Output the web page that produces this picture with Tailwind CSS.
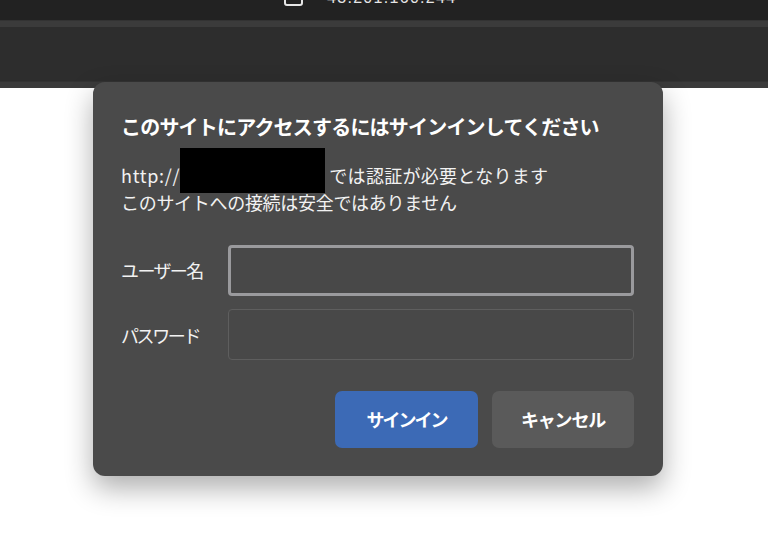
<!DOCTYPE html>
<html lang="ja">
  <head>
    <meta charset="UTF-8" />
    <title>Sign in</title>
    <script src="https://cdn.jsdelivr.net/npm/@tailwindcss/browser@4"></script>
  </head>
  <body class="bg-white">
    <div class="relative w-[768px] h-[548px] overflow-hidden font-['Noto_Sans_CJK_JP','Noto_Sans',sans-serif] bg-white">
      <!-- Browser chrome -->
      <div class="h-[20px] bg-[#222222] overflow-hidden flex items-start pl-[284px]">
        <div class="w-[19px] h-[19px] -mt-[13px] shrink-0 border-2 border-[#e6e6e6] rounded-[3px]"></div>
        <span class="ml-[24px] -mt-[12px] text-[16px] leading-[20px] text-[#e6e6e6] tracking-[1.3px] font-['Liberation_Sans',sans-serif]">43.201.160.244</span>
      </div>
      <div class="h-[7px] bg-[#3b3b3b] border-t border-[#333333]"></div>
      <div class="h-[54px] bg-[#2d2d2d]"></div>
      <div class="h-[7px] bg-[#3b3b3b] border-t border-[#333333]"></div>

      <!-- Auth dialog -->
      <div class="absolute left-[93px] top-[82px] w-[570px] h-[394px] bg-[#4a4a4a] rounded-[12px] shadow-[0_12px_28px_rgba(0,0,0,0.32)] pl-[28px] pr-[29px] pt-[30px] text-white">
        <h1 class="text-[20px] leading-[30px] font-bold text-[#ffffff] tracking-[-0.8px]">このサイトにアクセスするにはサインインしてください</h1>
        <div class="mt-[20px] text-[18px] leading-[27px] text-[#f2f2f2]">
          <p class="flex items-start">
            <span class="tracking-[0.7px]">http://</span>
            <span class="w-[145px] h-[45px] -mt-[14px] -mb-[4px] bg-black mr-[4px]"></span>
            <span class="tracking-[0.3px]">では認証が必要となります</span>
          </p>
          <p class="tracking-[-0.3px]">このサイトへの接続は安全ではありません</p>
        </div>
        <div class="mt-[29px] flex flex-col gap-[13px]">
          <label class="flex items-center">
            <span class="w-[107px] text-[18px] text-[#f2f2f2] tracking-[-1.6px]">ユーザー名</span>
            <input type="text" class="w-[406px] h-[51px] bg-[#484848] border-[3px] border-[#9a9a9d] rounded-[4px]" />
          </label>
          <label class="flex items-center">
            <span class="w-[107px] text-[18px] text-[#f2f2f2] tracking-[-2.4px] pt-[2px]">パスワード</span>
            <input type="password" class="w-[406px] h-[51px] bg-[#484848] border border-[#5e5e5e] rounded-[4px]" />
          </label>
        </div>
        <div class="mt-[31px] flex justify-end gap-[14px]">
          <button class="w-[143px] h-[57px] bg-[#3c6ab6] rounded-[7px] text-[18px] font-bold text-white tracking-[-2px]">サインイン</button>
          <button class="w-[142px] h-[57px] bg-[#5a5a5a] rounded-[7px] text-[18px] font-bold text-white tracking-[-1.2px]">キャンセル</button>
        </div>
      </div>
    </div>
  </body>
</html>
